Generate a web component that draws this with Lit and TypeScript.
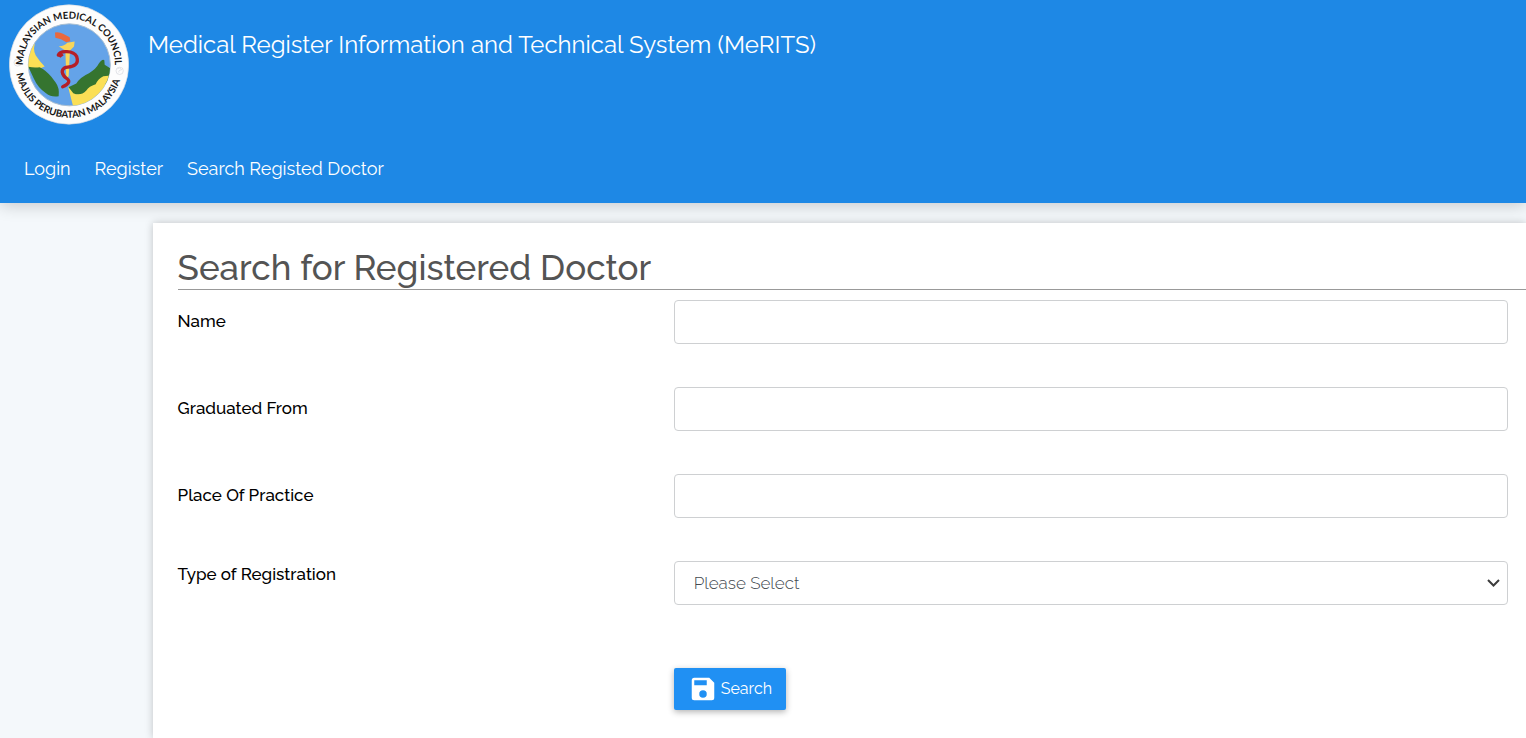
import { LitElement, html, css, svg } from "lit";
import { customElement } from "lit/decorators.js";

@customElement("council-logo")
export class CouncilLogo extends LitElement {
  static styles = css`
    :host { display: block; }
    .logo { display: block; width: 120px; height: 121px; }
    .ring { font: 700 29px "Lato", sans-serif; fill: #161616; }
  `;

  render() {
    return html`
      <svg class="logo" viewBox="26 12 360 362" role="img" aria-label="Malaysian Medical Council">
        ${svg`
          <defs>
            <path id="upper" d="M70 217 A138 138 0 1 1 342 217" />
            <path id="lower" d="M46 193 A160 160 0 0 0 366 193" />
            <clipPath id="disc"><circle cx="207" cy="194" r="123" /></clipPath>
          </defs>
          <circle cx="206" cy="193" r="179" fill="#fdfdfd" stroke="#d8dde2" stroke-width="2" />
          <circle cx="207" cy="194" r="123" fill="#64a3e8" stroke="#a9bfd2" stroke-width="3" />
          <g clip-path="url(#disc)">
            <path d="M98 125 L85 150 L80 204 L118 205 L133 199 Q116 181 106 165 Q98 149 103 134Z" fill="#fbdf55" />
            <path d="M84 200 Q103 204 118 201 Q138 211 153 230 L166 247 Q178 263 175 288 Q153 292 137 279 Q112 262 100 234Z" fill="#35742f" />
            <path d="M204 261 L228 250 Q239 231 266 219 Q288 206 295 191 Q306 175 312 180 L313 194 L332 206 L336 240 L255 285 L215 282Z" fill="#35742f" />
            <path d="M203 259 L219 279 Q241 289 258 271 Q266 258 286 252 Q293 236 309 228 L342 225 L320 300 L220 325Z" fill="#fbdf55" />
          </g>
          <path d="M164 97 Q176 94 188 101 L208 111 L210 123 L198 126 L182 117 L165 113Z" fill="#e9683c" />
          <path d="M175 138 Q191 139 201 128 L223 124 L221 139 L209 151 L205 228 L198 235 L195 151Z" fill="#f8d65a" />
          <path d="M174 165 C178 150 220 151 229 169 C237 192 220 200 202 201 C187 202 181 213 190 226 C197 237 210 237 204 248 C201 254 194 257 187 260" fill="none" stroke="#b51e27" stroke-width="10" stroke-linecap="round" />
          <path d="M169 164 Q181 151 190 165 L180 173Z" fill="#b51e27" />
          <g fill="none" stroke="#d4d7dc" stroke-width="2">
            <circle cx="52" cy="187" r="11" /><path d="M45 181 q8 -7 13 3 q-11 1 -8 8" />
            <circle cx="358" cy="212" r="11" /><path d="M351 206 q8 -7 13 3 q-11 1 -8 8" />
          </g>
          <text class="ring"><textPath href="#upper" startOffset="50%" text-anchor="middle">MALAYSIAN MEDICAL COUNCIL</textPath></text>
          <text class="ring"><textPath href="#lower" startOffset="48%" text-anchor="middle">MAJLIS PERUBATAN MALAYSIA</textPath></text>
        `}
      </svg>
    `;
  }
}

@customElement("app-root")
export class AppRoot extends LitElement {
  static styles = css`
    :host {
      display: flex;
      flex-direction: column;
      min-height: 100vh;
      overflow: hidden;
      background: #f4f8fb;
      color: #000;
      font-family: "Raleway", "Lato", sans-serif;
      font-size: 17px;
      line-height: 24px;
    }
    * { box-sizing: border-box; }
    .header {
      background: #1e88e5;
      color: #fff;
      box-shadow: 0 2px 16px rgba(0, 0, 0, 0.2);
    }
    .brand { display: flex; gap: 19px; padding: 4px 9px 0; }
    .title { padding-top: 25px; font-size: 24px; line-height: 32px; }
    .nav { display: flex; gap: 24px; padding: 32px 24px 22px; font-size: 18px; }
    .link { color: inherit; text-decoration: none; }
    .card {
      flex: 1;
      margin: 20px 0 0 10%;
      padding: 25px 0 24px 25px;
      background: #fff;
      box-shadow: 0 0 8px rgba(0, 0, 0, 0.22);
    }
    .heading {
      margin: 0 0 10px;
      padding-bottom: 1px;
      border-bottom: 1px solid #999;
      color: #545454;
      font-size: 35px;
      font-weight: 500;
      line-height: 40px;
    }
    .form { display: grid; gap: 43px; padding-right: 18px; }
    .row { display: grid; grid-template-columns: 496fr 834fr; align-items: start; }
    .label { padding-top: 8px; font-weight: 500; line-height: 26px; justify-self: start; }
    .row.top .label { padding-top: 0; }
    .control {
      width: 100%;
      height: 44px;
      padding: 0 19px;
      border: 1px solid #ced0d2;
      border-radius: 4px;
      background: #fff;
      color: #444a50;
      font: inherit;
      font-weight: 300;
    }
    .picker { display: grid; align-items: center; }
    .picker > * { grid-area: 1 / 1; }
    .select { appearance: none; }
    .chevron { justify-self: end; margin-right: 8px; pointer-events: none; }
    .actions { grid-column: 2; justify-self: start; margin-top: 20px; }
    .button {
      display: flex;
      align-items: center;
      gap: 3px;
      height: 42px;
      padding: 0 14px;
      border: 0;
      border-radius: 2px;
      background: #2090f3;
      color: #fff;
      font: inherit;
      font-size: 16px;
      line-height: 24px;
      box-shadow: 0 2px 6px rgba(0, 0, 0, 0.3);
    }
  `;

  private fields = [
    { id: "name", label: "Name" },
    { id: "graduated", label: "Graduated From" },
    { id: "practice", label: "Place Of Practice" },
  ];

  render() {
    return html`
      <header class="header">
        <div class="brand">
          <council-logo></council-logo>
          <div class="title">Medical Register Information and Technical System (MeRITS)</div>
        </div>
        <nav class="nav">
          <a class="link" href="#login">Login</a>
          <a class="link" href="#register">Register</a>
          <a class="link" href="#search">Search Registed Doctor</a>
        </nav>
      </header>
      <main class="card">
        <h1 class="heading">Search for Registered Doctor</h1>
        <form class="form" @submit=${(e: Event) => e.preventDefault()}>
          ${this.fields.map(
            (f) => html`
              <div class="row">
                <label class="label" for=${f.id}>${f.label}</label>
                <input class="control" id=${f.id} type="text" />
              </div>
            `
          )}
          <div class="row top">
            <label class="label" for="type">Type of Registration</label>
            <div class="picker">
              <select class="control select" id="type">
                <option>Please Select</option>
              </select>
              <svg class="chevron" width="13" height="8" viewBox="0 0 13 8" aria-hidden="true">
                <path d="M1 1 L6.5 6.5 L12 1" fill="none" stroke="#3c3c3c" stroke-width="2" />
              </svg>
            </div>
          </div>
          <div class="row">
            <div class="actions">
              <button class="button" type="submit">
                <svg width="30" height="30" viewBox="0 0 24 24" aria-hidden="true">
                  <path fill="#fff" d="M15 9H5V5h10m-3 14a3 3 0 0 1-3-3 3 3 0 0 1 3-3 3 3 0 0 1 3 3 3 3 0 0 1-3 3m5-16H5a2 2 0 0 0-2 2v14a2 2 0 0 0 2 2h14a2 2 0 0 0 2-2V7z" />
                </svg>
                Search
              </button>
            </div>
          </div>
        </form>
      </main>
    `;
  }
}
